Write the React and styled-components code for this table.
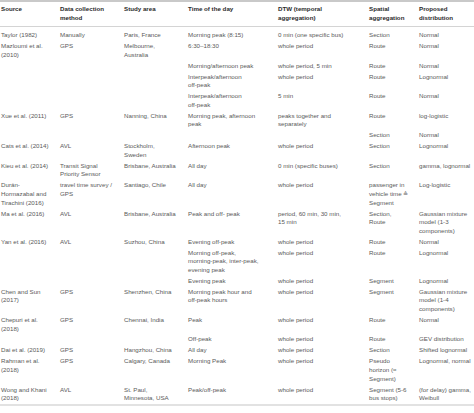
import React from "react";
import styled, { createGlobalStyle } from "styled-components";

const GlobalStyle = createGlobalStyle`
  html, body {
    margin: 0;
    padding: 0;
    background: #ffffff;
  }
  body {
    font-family: "Liberation Sans", Arial, Helvetica, sans-serif;
    overflow: hidden;
  }
`;

const Table = styled.table`
  width: 474px;
  table-layout: fixed;
  border-collapse: collapse;
  border-top: 2.5px solid #c9c9c9;
  border-bottom: 2px solid #e2e2e2;
  font-size: 6.2px;
`;

const HeadCell = styled.th`
  text-align: left;
  vertical-align: top;
  font-weight: bold;
  color: #2a2a2a;
  line-height: 9px;
  padding: 2.2px 3px 4.3px ${({ $first }) => ($first ? "1px" : "0")};
  border-bottom: 1.5px solid #d4d4d4;
  white-space: pre-line;
`;

const Cell = styled.td`
  vertical-align: top;
  color: #5a5a5a;
  line-height: 8.6px;
  padding: ${({ $top }) => ($top ? "3.6px" : "1.2px")} 2px 1.2px
    ${({ $first }) => ($first ? "1px" : "0")};
  white-space: pre-line;
`;

const widths = [60, 64, 64, 90, 91, 50, 55];

const headers = [
  "Source",
  "Data collection\nmethod",
  "Study area",
  "Time of the day",
  "DTW (temporal\naggregation)",
  "Spatial\naggregation",
  "Proposed\ndistribution",
];

const rows = [
  ["Taylor (1982)", "Manually", "Paris, France", "Morning peak (8:15)", "0 min (one specific bus)", "Section", "Normal"],
  ["Mazloumi et al.\n(2010)", "GPS", "Melbourne,\nAustralia", "6:30–18:30", "whole period", "Route", "Normal"],
  ["", "", "", "Morning/afternoon peak", "whole period, 5 min", "Route", "Normal"],
  ["", "", "", "Interpeak/afternoon\noff-peak", "whole period", "Route", "Lognormal"],
  ["", "", "", "Interpeak/afternoon\noff-peak", "5 min", "Route", "Normal"],
  ["Xue et al. (2011)", "GPS", "Nanning, China", "Morning peak, afternoon\npeak", "peaks together and\nseparately", "Route", "log-logistic"],
  ["", "", "", "", "", "Section", "Normal"],
  ["Cats et al. (2014)", "AVL", "Stockholm,\nSweden", "Afternoon peak", "whole period", "Section", "Lognormal"],
  ["Kieu et al. (2014)", "Transit Signal\nPriority Sensor", "Brisbane, Australia", "All day", "0 min (specific buses)", "Section", "gamma, lognormal"],
  ["Durán-\nHormazabal and\nTirachini (2016)", "travel time survey /\nGPS", "Santiago, Chile", "All day", "whole period", "passenger in\nvehicle time ≙\nSegment", "Log-logistic"],
  ["Ma et al. (2016)", "AVL", "Brisbane, Australia", "Peak and off- peak", "period, 60 min, 30 min,\n15 min", "Section,\nRoute", "Gaussian mixture\nmodel (1-3\ncomponents)"],
  ["Yan et al. (2016)", "AVL", "Suzhou, China", "Evening off-peak", "whole period", "Route", "Normal"],
  ["", "", "", "Morning off-peak,\nmorning-peak, inter-peak,\nevening peak", "whole period", "Route", "Lognormal"],
  ["", "", "", "Evening peak", "whole period", "Segment", "Lognormal"],
  ["Chen and Sun\n(2017)", "GPS", "Shenzhen, China", "Morning peak hour and\noff-peak hours", "whole period", "Segment", "Gaussian mixture\nmodel (1-4\ncomponents)"],
  ["Chepuri et al.\n(2018)", "GPS", "Chennai, India", "Peak", "whole period", "Route", "Normal"],
  ["", "", "", "Off-peak", "whole period", "Route", "GEV distribution"],
  ["Dai et al. (2019)", "GPS", "Hangzhou, China", "All day", "whole period", "Section", "Shifted lognormal"],
  ["Rahman et al.\n(2018)", "GPS", "Calgary, Canada", "Morning Peak", "whole period", "Pseudo\nhorizon (≈\nSegment)", "Lognormal, normal"],
  ["Wong and Khani\n(2018)", "AVL", "St. Paul,\nMinnesota, USA", "Peak/off-peak", "whole period", "Segment (5-6\nbus stops)", "(for delay) gamma,\nWeibull"],
];

export default function App() {
  return (
    <>
      <GlobalStyle />
      <Table>
        <colgroup>
          {widths.map((w, i) => (
            <col key={i} style={{ width: w }} />
          ))}
        </colgroup>
        <thead>
          <tr>
            {headers.map((h, i) => (
              <HeadCell key={i} $first={i === 0}>
                {h}
              </HeadCell>
            ))}
          </tr>
        </thead>
        <tbody>
          {rows.map((row, r) => (
            <tr key={r}>
              {row.map((c, i) => (
                <Cell key={i} $first={i === 0} $top={r === 0}>
                  {c}
                </Cell>
              ))}
            </tr>
          ))}
        </tbody>
      </Table>
    </>
  );
}
